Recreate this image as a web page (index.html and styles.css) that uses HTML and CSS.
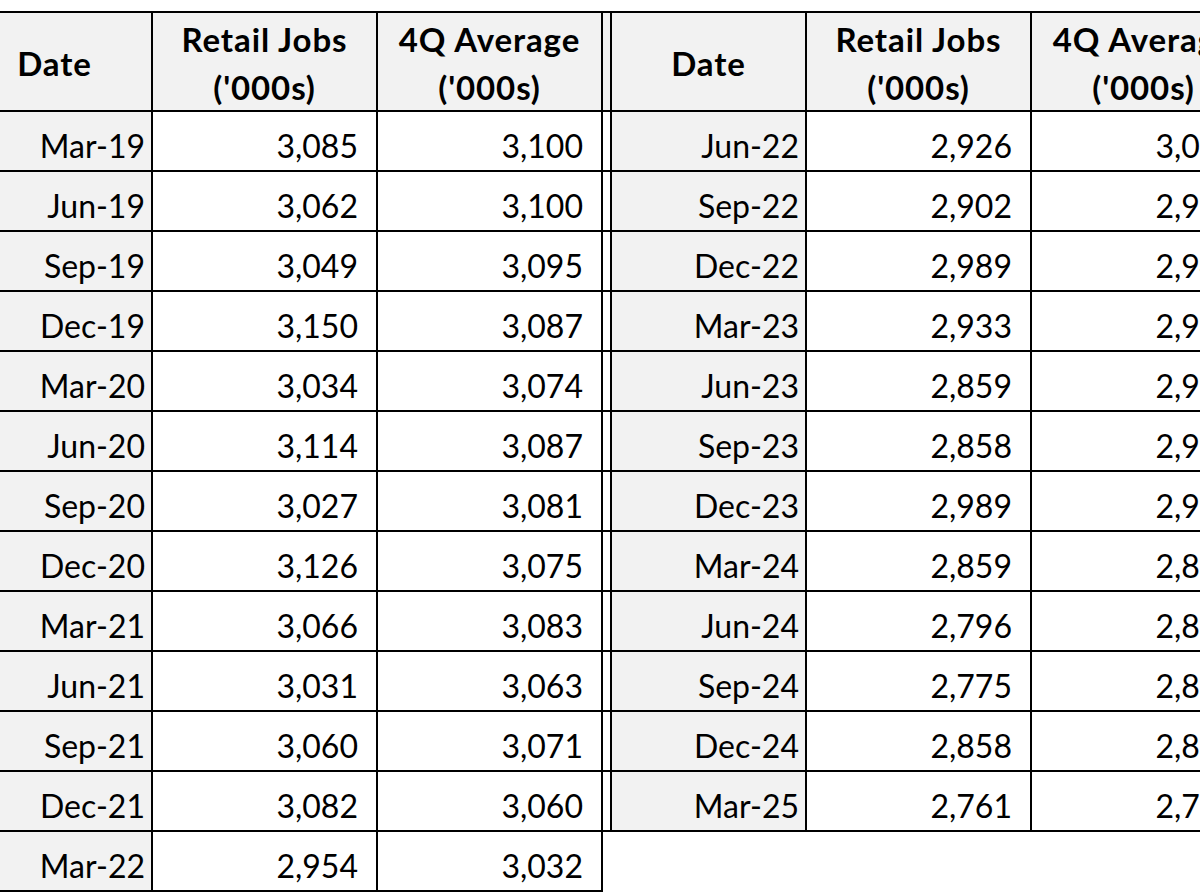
FILE: index.html
```html
<!DOCTYPE html>
<html lang="en">
<head>
<meta charset="utf-8">
<title>Retail Jobs</title>
<link rel="stylesheet" href="styles.css">
</head>
<body>
<div class="sheet" role="table">
  <div class="cell head">Date</div>
  <div class="cell head">Retail Jobs<br>('000s)</div>
  <div class="cell head">4Q Average<br>('000s)</div>
  <div class="cell gap head"></div>
  <div class="cell head">Date</div>
  <div class="cell head">Retail Jobs<br>('000s)</div>
  <div class="cell head">4Q Average<br>('000s)</div>

  <div class="cell date">Mar-19</div><div class="cell num">3,085</div><div class="cell num">3,100</div><div class="cell gap"></div><div class="cell date">Jun-22</div><div class="cell num">2,926</div><div class="cell num">3,006</div>
  <div class="cell date">Jun-19</div><div class="cell num">3,062</div><div class="cell num">3,100</div><div class="cell gap"></div><div class="cell date">Sep-22</div><div class="cell num">2,902</div><div class="cell num">2,966</div>
  <div class="cell date">Sep-19</div><div class="cell num">3,049</div><div class="cell num">3,095</div><div class="cell gap"></div><div class="cell date">Dec-22</div><div class="cell num">2,989</div><div class="cell num">2,943</div>
  <div class="cell date">Dec-19</div><div class="cell num">3,150</div><div class="cell num">3,087</div><div class="cell gap"></div><div class="cell date">Mar-23</div><div class="cell num">2,933</div><div class="cell num">2,938</div>
  <div class="cell date">Mar-20</div><div class="cell num">3,034</div><div class="cell num">3,074</div><div class="cell gap"></div><div class="cell date">Jun-23</div><div class="cell num">2,859</div><div class="cell num">2,921</div>
  <div class="cell date">Jun-20</div><div class="cell num">3,114</div><div class="cell num">3,087</div><div class="cell gap"></div><div class="cell date">Sep-23</div><div class="cell num">2,858</div><div class="cell num">2,910</div>
  <div class="cell date">Sep-20</div><div class="cell num">3,027</div><div class="cell num">3,081</div><div class="cell gap"></div><div class="cell date">Dec-23</div><div class="cell num">2,989</div><div class="cell num">2,910</div>
  <div class="cell date">Dec-20</div><div class="cell num">3,126</div><div class="cell num">3,075</div><div class="cell gap"></div><div class="cell date">Mar-24</div><div class="cell num">2,859</div><div class="cell num">2,891</div>
  <div class="cell date">Mar-21</div><div class="cell num">3,066</div><div class="cell num">3,083</div><div class="cell gap"></div><div class="cell date">Jun-24</div><div class="cell num">2,796</div><div class="cell num">2,876</div>
  <div class="cell date">Jun-21</div><div class="cell num">3,031</div><div class="cell num">3,063</div><div class="cell gap"></div><div class="cell date">Sep-24</div><div class="cell num">2,775</div><div class="cell num">2,855</div>
  <div class="cell date">Sep-21</div><div class="cell num">3,060</div><div class="cell num">3,071</div><div class="cell gap"></div><div class="cell date">Dec-24</div><div class="cell num">2,858</div><div class="cell num">2,822</div>
  <div class="cell date">Dec-21</div><div class="cell num">3,082</div><div class="cell num">3,060</div><div class="cell gap"></div><div class="cell date">Mar-25</div><div class="cell num">2,761</div><div class="cell num">2,798</div>
  <div class="cell date">Mar-22</div><div class="cell num">2,954</div><div class="cell num">3,032</div><div class="cell empty"></div><div class="cell empty"></div><div class="cell empty"></div><div class="cell empty"></div>
</div>
</body>
</html>
```

FILE: styles.css
```css
html, body {
  margin: 0;
  padding: 0;
  background: #ffffff;
  overflow: hidden;
}

body {
  width: 1200px;
  height: 894px;
  font-family: "Lato", "Open Sans", sans-serif;
  color: #000000;
}

.sheet {
  display: grid;
  grid-template-columns: 195px 225px 225px 9px 195px 225px 225px;
  grid-template-rows: 99px repeat(13, 60px);
  width: 1299px;
  margin: 11px 0 0 -42px;
  border-top: 2px solid #000;
}

.cell {
  box-sizing: border-box;
  border-right: 2px solid #000;
  border-bottom: 2px solid #000;
  font-size: 32px;
  line-height: 38px;
  white-space: nowrap;
  overflow: hidden;
}

.head {
  background: #f2f2f2;
  font-weight: 700;
  font-size: 33px;
  letter-spacing: 0.9px;
  line-height: 48px;
  display: flex;
  align-items: center;
  justify-content: center;
  text-align: center;
  padding-top: 3px;
}

.date,
.num {
  display: flex;
  align-items: flex-end;
  justify-content: flex-end;
  padding-bottom: 5px;
}

.date {
  background: #f2f2f2;
  padding-right: 6px;
}

.num {
  background: #ffffff;
  padding-right: 18px;
}

.gap {
  background: #ffffff;
}

.gap.head {
  background: #f2f2f2;
}

.empty {
  border: none;
}
```
